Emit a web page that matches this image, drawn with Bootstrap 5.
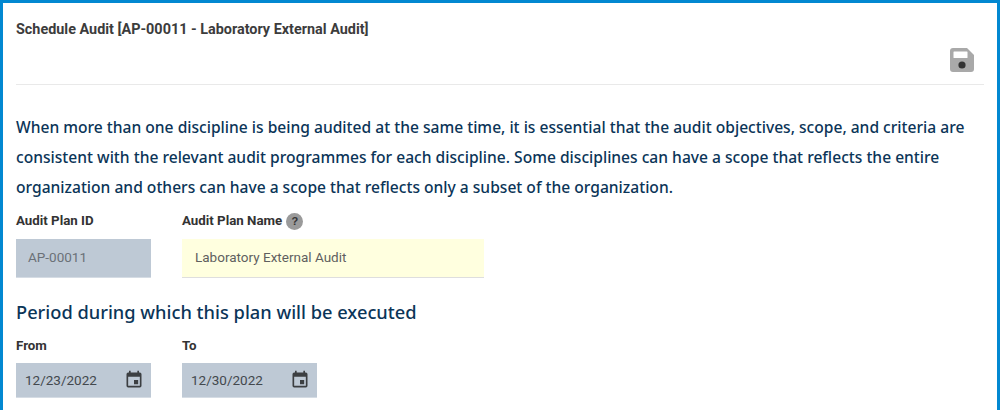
<!DOCTYPE html>
<html lang="en">
<head>
<meta charset="utf-8">
<title>Schedule Audit</title>
<link href="https://cdn.jsdelivr.net/npm/bootstrap@5.3.0/dist/css/bootstrap.min.css" rel="stylesheet">
<style>
html, body { height: 410px; overflow: hidden; background: #fff; }
.shell { height: 410px; border: 3px solid #0288d1; border-bottom: 0; padding: 0 13px; font-family: Roboto, sans-serif; overflow: hidden; }
.title-txt { font-size: 14.4px; font-weight: 700; color: #3c3c3c; line-height: 20px; padding-top: 17px; margin: 0; }
.save-row { height: 44px; padding-right: 10px; padding-top: 8px; }
.rule { height: 1px; background: #e9e9e9; }
.intro { font-family: "Noto Sans", sans-serif; font-weight: 500; font-size: 15.6px; line-height: 30px; color: #0b3558; margin: 27px 0 0; }
.lab { font-size: 13.3px; font-weight: 700; color: #333; line-height: 20px; margin: 0; }
.hint { width: 17px; height: 17px; border-radius: 50%; background: #9a9a9a; color: #333; font-size: 11px; font-weight: 700; font-family: "Liberation Sans", sans-serif; line-height: 17px; text-align: center; }
.fld-id { width: 135px; }
.fld-name { width: 302px; }
.fld-date { width: 135px; }
.box { height: 39px; font-size: 13.5px; padding: 0 12px 2px; border-bottom: 1px solid #dedede; }
.box-grey { background: #bec9d5; color: #6b7178; border-bottom-color: #d5dce4; }
.box-yellow { background: #ffffdf; color: #5f5f5f; padding-left: 13px; }
.box-date { height: 35px; background: #bec9d5; color: #43484d; padding: 0 7px 0 9px; border-bottom: 1px solid #d5dce4; font-size: 13.5px; }
.sect { font-family: "Noto Sans", sans-serif; font-weight: 500; font-size: 18.25px; line-height: 26px; color: #0b3558; margin: 21px 0 0; }
.gap-cols { column-gap: 31px; }
.id-row { margin-top: 9px; }
.id-row .lab { margin-bottom: 8px; }
.date-row { margin-top: 11px; }
.date-row .lab { margin-bottom: 7px; }
</style>
</head>
<body>
<div class="shell">
  <p class="title-txt">Schedule Audit [AP-00011 - Laboratory External Audit]</p>
  <div class="save-row d-flex justify-content-end">
    <svg width="24" height="24" viewBox="0 0 24 24" aria-label="Save"><path d="M3 0H17L24 7V21a3 3 0 0 1-3 3H3a3 3 0 0 1-3-3V3a3 3 0 0 1 3-3Z" fill="#a9a9a9"/><rect x="3.5" y="3.5" width="14" height="6.5" rx=".5" fill="#fff"/><circle cx="12" cy="17" r="3.6" fill="#333"/></svg>
  </div>
  <div class="rule"></div>
  <p class="intro">When more than one discipline is being audited at the same time, it is essential that the audit objectives, scope, and criteria are consistent with the relevant audit programmes for each discipline. Some disciplines can have a scope that reflects the entire organization and others can have a scope that reflects only a subset of the organization.</p>
  <div class="d-flex gap-cols id-row">
    <div class="fld-id">
      <p class="lab">Audit Plan ID</p>
      <div class="box box-grey d-flex align-items-center">AP-00011</div>
    </div>
    <div class="fld-name">
      <div class="lab d-flex align-items-center gap-1">Audit Plan Name <span class="hint">?</span></div>
      <div class="box box-yellow d-flex align-items-center">Laboratory External Audit</div>
    </div>
  </div>
  <h2 class="sect">Period during which this plan will be executed</h2>
  <div class="d-flex gap-cols date-row">
    <div class="fld-date">
      <p class="lab">From</p>
      <div class="box-date d-flex align-items-center justify-content-between">12/23/2022
        <svg width="20" height="20" viewBox="0 0 24 24" fill="#3c3f42"><path d="M17 12h-5v5h5v-5zM16 1v2H8V1H6v2H5a2 2 0 0 0-2 2v14a2 2 0 0 0 2 2h14a2 2 0 0 0 2-2V5a2 2 0 0 0-2-2h-1V1h-2zm3 18H5V8h14v11z"/></svg>
      </div>
    </div>
    <div class="fld-date">
      <p class="lab">To</p>
      <div class="box-date d-flex align-items-center justify-content-between">12/30/2022
        <svg width="20" height="20" viewBox="0 0 24 24" fill="#3c3f42"><path d="M17 12h-5v5h5v-5zM16 1v2H8V1H6v2H5a2 2 0 0 0-2 2v14a2 2 0 0 0 2 2h14a2 2 0 0 0 2-2V5a2 2 0 0 0-2-2h-1V1h-2zm3 18H5V8h14v11z"/></svg>
      </div>
    </div>
  </div>
</div>
<script src="https://cdn.jsdelivr.net/npm/bootstrap@5.3.0/dist/js/bootstrap.bundle.min.js"></script>
</body>
</html>
